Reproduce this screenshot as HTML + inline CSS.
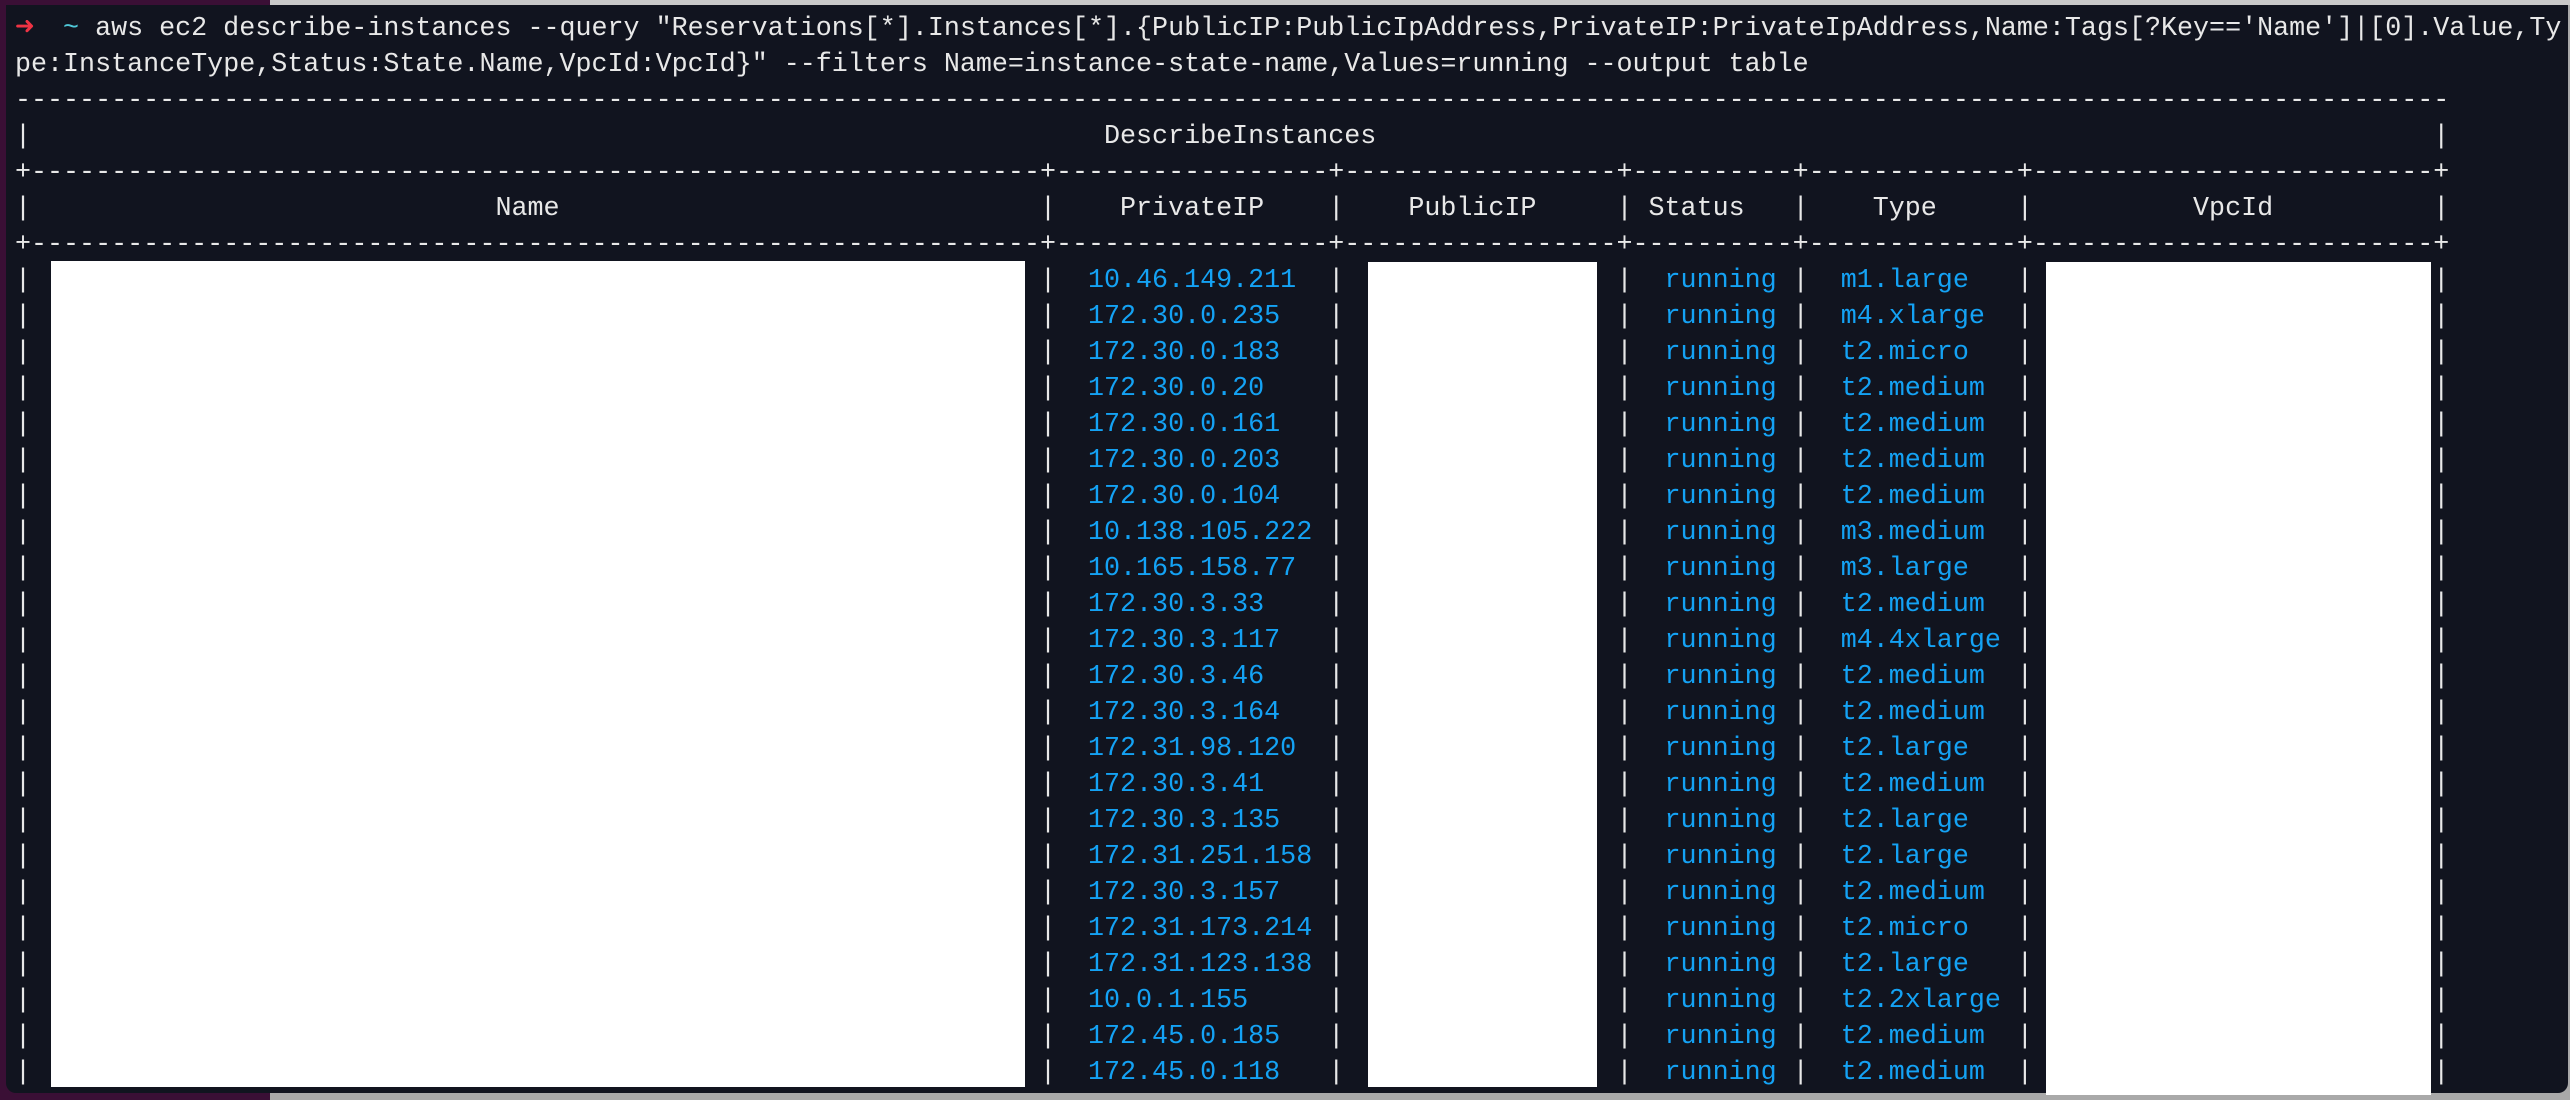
<!DOCTYPE html>
<html><head><meta charset="utf-8">
<style>
html,body{margin:0;padding:0;width:2570px;height:1100px;overflow:hidden;background:#a9a9a9;}
#top{position:absolute;left:0;top:0;width:2570px;height:5px;background:#c9c9c9;}
#purp{position:absolute;left:0;top:0;width:270px;height:1100px;background:#3a0f35;}
#term{position:absolute;left:6px;top:5px;width:2562px;height:1088px;background:#11141f;border-radius:0 0 10px 10px;}
#t{position:absolute;left:15px;top:2px;font-family:"Liberation Mono",monospace;font-size:26.7px;color:#e8e8e8;}
.r{position:absolute;left:0;height:36px;line-height:36px;white-space:pre;width:2460px;}
.r span{position:absolute;top:0;}
.b{color:#14a2f4;}
.a0{left:0}.a64{left:64ch}.a82{left:82ch}.a100{left:100ch}.a111{left:111ch}.a125{left:125ch}.a151{left:151ch}
.ip{left:67ch}.st{left:103ch}.ty{left:114ch}
.box{position:absolute;background:#fff;}
</style></head><body>
<div id="top"></div>
<div id="purp"></div>
<div id="term"></div>
<div id="t">
<div class="r" style="top:9px"><span style="left:0;color:#ee3344;font-weight:bold;font-size:32px">➜</span><span style="left:3ch;color:#4fc8d8">~</span><span style="left:5ch">aws ec2 describe-instances --query "Reservations[*].Instances[*].{PublicIP:PublicIpAddress,PrivateIP:PrivateIpAddress,Name:Tags[?Key=='Name']|[0].Value,Ty</span></div>
<div class="r" style="top:45px">pe:InstanceType,Status:State.Name,VpcId:VpcId}" --filters Name=instance-state-name,Values=running --output table</div>
<div class="r" style="top:81px">--------------------------------------------------------------------------------------------------------------------------------------------------------</div>
<div class="r" style="top:117px"><span class="a0">|</span><span style="left:68ch">DescribeInstances</span><span class="a151">|</span></div>
<div class="r" style="top:153px">+---------------------------------------------------------------+-----------------+-----------------+----------+-------------+-------------------------+</div>
<div class="r" style="top:189px"><span class="a0">|</span><span style="left:30ch">Name</span><span class="a64">|</span><span style="left:69ch">PrivateIP</span><span class="a82">|</span><span style="left:87ch">PublicIP</span><span class="a100">|</span><span style="left:102ch">Status</span><span class="a111">|</span><span style="left:116ch">Type</span><span class="a125">|</span><span style="left:136ch">VpcId</span><span class="a151">|</span></div>
<div class="r" style="top:225px">+---------------------------------------------------------------+-----------------+-----------------+----------+-------------+-------------------------+</div>

<div class="r" style="top:261px"><span class="a0">|</span><span class="a64">|</span><span class="ip b">10.46.149.211</span><span class="a82">|</span><span class="a100">|</span><span class="st b">running</span><span class="a111">|</span><span class="ty b">m1.large</span><span class="a125">|</span><span class="a151">|</span></div>
<div class="r" style="top:297px"><span class="a0">|</span><span class="a64">|</span><span class="ip b">172.30.0.235</span><span class="a82">|</span><span class="a100">|</span><span class="st b">running</span><span class="a111">|</span><span class="ty b">m4.xlarge</span><span class="a125">|</span><span class="a151">|</span></div>
<div class="r" style="top:333px"><span class="a0">|</span><span class="a64">|</span><span class="ip b">172.30.0.183</span><span class="a82">|</span><span class="a100">|</span><span class="st b">running</span><span class="a111">|</span><span class="ty b">t2.micro</span><span class="a125">|</span><span class="a151">|</span></div>
<div class="r" style="top:369px"><span class="a0">|</span><span class="a64">|</span><span class="ip b">172.30.0.20</span><span class="a82">|</span><span class="a100">|</span><span class="st b">running</span><span class="a111">|</span><span class="ty b">t2.medium</span><span class="a125">|</span><span class="a151">|</span></div>
<div class="r" style="top:405px"><span class="a0">|</span><span class="a64">|</span><span class="ip b">172.30.0.161</span><span class="a82">|</span><span class="a100">|</span><span class="st b">running</span><span class="a111">|</span><span class="ty b">t2.medium</span><span class="a125">|</span><span class="a151">|</span></div>
<div class="r" style="top:441px"><span class="a0">|</span><span class="a64">|</span><span class="ip b">172.30.0.203</span><span class="a82">|</span><span class="a100">|</span><span class="st b">running</span><span class="a111">|</span><span class="ty b">t2.medium</span><span class="a125">|</span><span class="a151">|</span></div>
<div class="r" style="top:477px"><span class="a0">|</span><span class="a64">|</span><span class="ip b">172.30.0.104</span><span class="a82">|</span><span class="a100">|</span><span class="st b">running</span><span class="a111">|</span><span class="ty b">t2.medium</span><span class="a125">|</span><span class="a151">|</span></div>
<div class="r" style="top:513px"><span class="a0">|</span><span class="a64">|</span><span class="ip b">10.138.105.222</span><span class="a82">|</span><span class="a100">|</span><span class="st b">running</span><span class="a111">|</span><span class="ty b">m3.medium</span><span class="a125">|</span><span class="a151">|</span></div>
<div class="r" style="top:549px"><span class="a0">|</span><span class="a64">|</span><span class="ip b">10.165.158.77</span><span class="a82">|</span><span class="a100">|</span><span class="st b">running</span><span class="a111">|</span><span class="ty b">m3.large</span><span class="a125">|</span><span class="a151">|</span></div>
<div class="r" style="top:585px"><span class="a0">|</span><span class="a64">|</span><span class="ip b">172.30.3.33</span><span class="a82">|</span><span class="a100">|</span><span class="st b">running</span><span class="a111">|</span><span class="ty b">t2.medium</span><span class="a125">|</span><span class="a151">|</span></div>
<div class="r" style="top:621px"><span class="a0">|</span><span class="a64">|</span><span class="ip b">172.30.3.117</span><span class="a82">|</span><span class="a100">|</span><span class="st b">running</span><span class="a111">|</span><span class="ty b">m4.4xlarge</span><span class="a125">|</span><span class="a151">|</span></div>
<div class="r" style="top:657px"><span class="a0">|</span><span class="a64">|</span><span class="ip b">172.30.3.46</span><span class="a82">|</span><span class="a100">|</span><span class="st b">running</span><span class="a111">|</span><span class="ty b">t2.medium</span><span class="a125">|</span><span class="a151">|</span></div>
<div class="r" style="top:693px"><span class="a0">|</span><span class="a64">|</span><span class="ip b">172.30.3.164</span><span class="a82">|</span><span class="a100">|</span><span class="st b">running</span><span class="a111">|</span><span class="ty b">t2.medium</span><span class="a125">|</span><span class="a151">|</span></div>
<div class="r" style="top:729px"><span class="a0">|</span><span class="a64">|</span><span class="ip b">172.31.98.120</span><span class="a82">|</span><span class="a100">|</span><span class="st b">running</span><span class="a111">|</span><span class="ty b">t2.large</span><span class="a125">|</span><span class="a151">|</span></div>
<div class="r" style="top:765px"><span class="a0">|</span><span class="a64">|</span><span class="ip b">172.30.3.41</span><span class="a82">|</span><span class="a100">|</span><span class="st b">running</span><span class="a111">|</span><span class="ty b">t2.medium</span><span class="a125">|</span><span class="a151">|</span></div>
<div class="r" style="top:801px"><span class="a0">|</span><span class="a64">|</span><span class="ip b">172.30.3.135</span><span class="a82">|</span><span class="a100">|</span><span class="st b">running</span><span class="a111">|</span><span class="ty b">t2.large</span><span class="a125">|</span><span class="a151">|</span></div>
<div class="r" style="top:837px"><span class="a0">|</span><span class="a64">|</span><span class="ip b">172.31.251.158</span><span class="a82">|</span><span class="a100">|</span><span class="st b">running</span><span class="a111">|</span><span class="ty b">t2.large</span><span class="a125">|</span><span class="a151">|</span></div>
<div class="r" style="top:873px"><span class="a0">|</span><span class="a64">|</span><span class="ip b">172.30.3.157</span><span class="a82">|</span><span class="a100">|</span><span class="st b">running</span><span class="a111">|</span><span class="ty b">t2.medium</span><span class="a125">|</span><span class="a151">|</span></div>
<div class="r" style="top:909px"><span class="a0">|</span><span class="a64">|</span><span class="ip b">172.31.173.214</span><span class="a82">|</span><span class="a100">|</span><span class="st b">running</span><span class="a111">|</span><span class="ty b">t2.micro</span><span class="a125">|</span><span class="a151">|</span></div>
<div class="r" style="top:945px"><span class="a0">|</span><span class="a64">|</span><span class="ip b">172.31.123.138</span><span class="a82">|</span><span class="a100">|</span><span class="st b">running</span><span class="a111">|</span><span class="ty b">t2.large</span><span class="a125">|</span><span class="a151">|</span></div>
<div class="r" style="top:981px"><span class="a0">|</span><span class="a64">|</span><span class="ip b">10.0.1.155</span><span class="a82">|</span><span class="a100">|</span><span class="st b">running</span><span class="a111">|</span><span class="ty b">t2.2xlarge</span><span class="a125">|</span><span class="a151">|</span></div>
<div class="r" style="top:1017px"><span class="a0">|</span><span class="a64">|</span><span class="ip b">172.45.0.185</span><span class="a82">|</span><span class="a100">|</span><span class="st b">running</span><span class="a111">|</span><span class="ty b">t2.medium</span><span class="a125">|</span><span class="a151">|</span></div>
<div class="r" style="top:1053px"><span class="a0">|</span><span class="a64">|</span><span class="ip b">172.45.0.118</span><span class="a82">|</span><span class="a100">|</span><span class="st b">running</span><span class="a111">|</span><span class="ty b">t2.medium</span><span class="a125">|</span><span class="a151">|</span></div>
</div>
<div class="box" style="left:51px;top:261px;width:974px;height:826px"></div>
<div class="box" style="left:1368px;top:262px;width:229px;height:825px"></div>
<div class="box" style="left:2046px;top:262px;width:385px;height:833px"></div>
</body></html>
